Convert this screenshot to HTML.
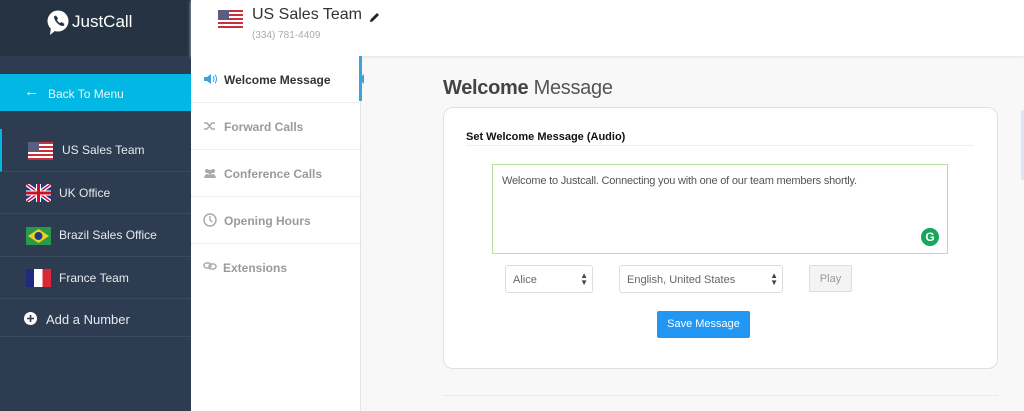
<!DOCTYPE html>
<html><head><style>
*{margin:0;padding:0;box-sizing:border-box}
body{width:1024px;height:411px;overflow:hidden;font-family:"Liberation Sans",sans-serif;background:#f8f8f8;position:relative}
.a{position:absolute}
#side{left:0;top:0;width:191px;height:411px;background:#2d3c50}
#logo{left:0;top:0;width:191px;height:56px;background:#263343}
.row{position:absolute;left:0;width:191px;border-bottom:1px solid #3a4a5e;color:#e6ebf0;font-size:12px}
.flag{position:absolute;left:26px;width:25px;height:18px}
#nav{left:191px;top:56px;width:170px;height:355px;background:#fff;border-right:1px solid #e4e4e4}
.ni{position:absolute;left:0;width:170px;height:47px;border-bottom:1px dotted #e0e0e0;font-size:12px;font-weight:bold;color:#9a9a9a}
.ni span{position:absolute;left:33px;top:17px}
.ni svg{position:absolute;left:12px;top:17px}
#head{left:191px;top:0;width:833px;height:56px;background:#fff;box-shadow:0 1px 3px #e2e2e2}
</style></head><body>
<div class="a" id="side"></div>
<div class="a" id="logo">
<svg class="a" style="left:46px;top:10px" width="24" height="26" viewBox="0 0 24 26"><circle cx="12" cy="11" r="10.5" fill="#fff"/><path d="M5 17l-1 8 6-5z" fill="#fff"/><path d="M8 6.5l2-1 2 3-1 1.5c.6 1.4 1.6 2.4 3 3l1.5-1 3 2-1 2c-4 .5-9.5-5-9.5-9.5z" fill="#263343"/></svg>
<div class="a" style="left:72px;top:12px;color:#fff;font-size:17px">JustCall</div>
</div>
<div class="a" style="left:0;top:74px;width:191px;height:37px;background:#00b8e3;color:#e6f8fd;font-size:12px"><span class="a" style="left:24px;top:9px;font-size:15px">←</span><span class="a" style="left:48px;top:13px">Back To Menu</span></div>
<div class="row" style="top:129px;height:43px;border-left:2px solid #00b8e3"><div class="flag" style="top:13px;background:repeating-linear-gradient(#c8303c 0 2px,#fff 2px 4px)"><div style="width:11px;height:9px;background:#5a5f80"></div></div><span class="a" style="left:60px;top:14px">US Sales Team</span></div>
<div class="row" style="top:172px;height:42px"><svg class="flag" style="top:12px" viewBox="0 0 25 18"><rect width="25" height="18" fill="#1f3a8a"/><path d="M0 0L25 18M25 0L0 18" stroke="#fff" stroke-width="4"/><path d="M0 0L25 18M25 0L0 18" stroke="#c8102e" stroke-width="1.5"/><path d="M12.5 0V18M0 9H25" stroke="#fff" stroke-width="5"/><path d="M12.5 0V18M0 9H25" stroke="#c8102e" stroke-width="3"/></svg><span class="a" style="left:59px;top:14px">UK Office</span></div>
<div class="row" style="top:214px;height:43px"><svg class="flag" style="top:13px" viewBox="0 0 25 18"><rect width="25" height="18" fill="#2a9a4a"/><path d="M12.5 2L23 9 12.5 16 2 9z" fill="#f0d020"/><circle cx="12.5" cy="9" r="4" fill="#1f3a8a"/></svg><span class="a" style="left:59px;top:14px">Brazil Sales Office</span></div>
<div class="row" style="top:257px;height:42px"><div class="flag" style="top:12px;background:linear-gradient(90deg,#1f2a80 0 33%,#fff 33% 66%,#d8283a 66%)"></div><span class="a" style="left:59px;top:14px">France Team</span></div>
<div class="row" style="top:299px;height:38px;font-size:13px"><svg class="a" style="left:24px;top:13px" width="13" height="13" viewBox="0 0 13 13"><circle cx="6.5" cy="6.5" r="6.5" fill="#fff"/><path d="M6.5 3v7M3 6.5h7" stroke="#2d3c50" stroke-width="1.6"/></svg><span class="a" style="left:46px;top:13px">Add a Number</span></div>
<div class="a" id="head">
<div class="a" style="left:27px;top:10px;width:25px;height:19px;background:repeating-linear-gradient(#c8303c 0 2px,#fff 2px 4px)"><div style="width:11px;height:10px;background:#5a5f80"></div></div>
<div class="a" style="left:61px;top:6px;font-size:16px;color:#333">US Sales Team</div>
<svg class="a" style="left:178px;top:12px" width="11" height="11" viewBox="0 0 11 11"><path d="M1 10l.5-2.5L8 1l2 2-6.5 6.5z" fill="#222"/></svg>
<div class="a" style="left:61px;top:30px;font-size:10px;color:#aaa">(334) 781-4409</div>
</div>
<div class="a" id="nav">
<div class="ni" style="top:0;color:#333"><svg width="14" height="12" viewBox="0 0 14 12"><path d="M1 4h3l4-3v10L4 8H1z" fill="#3aa3dc"/><path d="M10 3q2 3 0 6M12 1.5q3 4.5 0 9" stroke="#3aa3dc" fill="none"/></svg><span style="left:33px">Welcome Message</span></div>
<div class="ni" style="top:47px"><svg width="14" height="12" viewBox="0 0 14 12"><path d="M1 3h3l5 6h3M1 9h3l5-6h3" stroke="#aaa" stroke-width="1.6" fill="none"/></svg><span>Forward Calls</span></div>
<div class="ni" style="top:94px"><svg width="14" height="12" viewBox="0 0 14 12"><circle cx="4" cy="4" r="2" fill="#aaa"/><circle cx="10" cy="4" r="2" fill="#aaa"/><circle cx="7" cy="5" r="2.2" fill="#aaa"/><path d="M1 11q1-4 3-4t3 4zM7 11q1-4 3-4t3 4zM4 11q1-4 3-4t3 4z" fill="#aaa"/></svg><span>Conference Calls</span></div>
<div class="ni" style="top:141px"><svg width="14" height="14" viewBox="0 0 14 14" style="top:16px"><circle cx="7" cy="7" r="6" stroke="#aaa" stroke-width="1.5" fill="none"/><path d="M7 3v4l2.5 2" stroke="#aaa" stroke-width="1.4" fill="none"/></svg><span>Opening Hours</span></div>
<div class="ni" style="top:188px;border-bottom:none"><svg width="14" height="10" viewBox="0 0 14 10"><rect x="1" y="2" width="7" height="5" rx="2.5" stroke="#aaa" stroke-width="1.5" fill="none"/><rect x="6" y="3" width="7" height="5" rx="2.5" stroke="#aaa" stroke-width="1.5" fill="none"/></svg><span style="left:32px">Extensions</span></div>
<div class="a" style="left:168px;top:0;width:3px;height:45px;background:#3aa3dc"></div>
<div class="a" style="left:163px;top:18px;width:0;height:0;border:5px solid transparent;border-right-color:#3aa3dc"></div>
</div>
<div class="a" style="left:443px;top:77px;font-size:20px;color:#555;letter-spacing:-.3px"><b style="color:#444">Welcome</b> Message</div>
<div class="a" style="left:443px;top:107px;width:555px;height:262px;background:#fff;border:1px solid #e0e0e0;border-radius:10px"></div>
<div class="a" style="left:466px;top:131px;font-size:11px;font-weight:bold;color:#111">Set Welcome Message (Audio)</div>
<div class="a" style="left:466px;top:145px;width:508px;height:1px;background:#eee"></div>
<div class="a" style="left:492px;top:164px;width:456px;height:90px;border:1px solid #b7df9f;background:#fff"><div class="a" style="left:9px;top:10px;font-size:11px;color:#555;letter-spacing:-.2px">Welcome to Justcall. Connecting you with one of our team members shortly.</div>
<div class="a" style="left:428px;top:63px;width:18px;height:18px;border-radius:50%;background:#1aa55c;color:#fff;font-size:12px;font-weight:bold;text-align:center;line-height:18px">G</div></div>
<div class="a" style="left:505px;top:265px;width:88px;height:28px;border:1px solid #ddd;border-radius:3px;background:#fff;font-size:11px;color:#666;padding:8px 0 0 7px">Alice<span class="a" style="right:4px;top:6px;font-size:8px;line-height:7px;color:#444">▲<br>▼</span></div>
<div class="a" style="left:619px;top:265px;width:164px;height:28px;border:1px solid #ddd;border-radius:3px;background:#fff;font-size:11px;color:#666;padding:8px 0 0 7px">English, United States<span class="a" style="right:4px;top:6px;font-size:8px;line-height:7px;color:#444">▲<br>▼</span></div>
<div class="a" style="left:809px;top:265px;width:43px;height:27px;border:1px solid #ddd;border-radius:2px;background:#f4f4f4;font-size:11px;color:#999;text-align:center;line-height:27px">Play</div>
<div class="a" style="left:657px;top:311px;width:93px;height:27px;background:#2196f3;border-radius:2px;font-size:11px;color:#fff;text-align:center;line-height:27px">Save Message</div>
<div class="a" style="left:443px;top:395px;width:555px;border-top:1px dotted #ddd"></div>
<div class="a" style="left:1021px;top:110px;width:3px;height:70px;background:#dde8f2"></div>
</body></html>
